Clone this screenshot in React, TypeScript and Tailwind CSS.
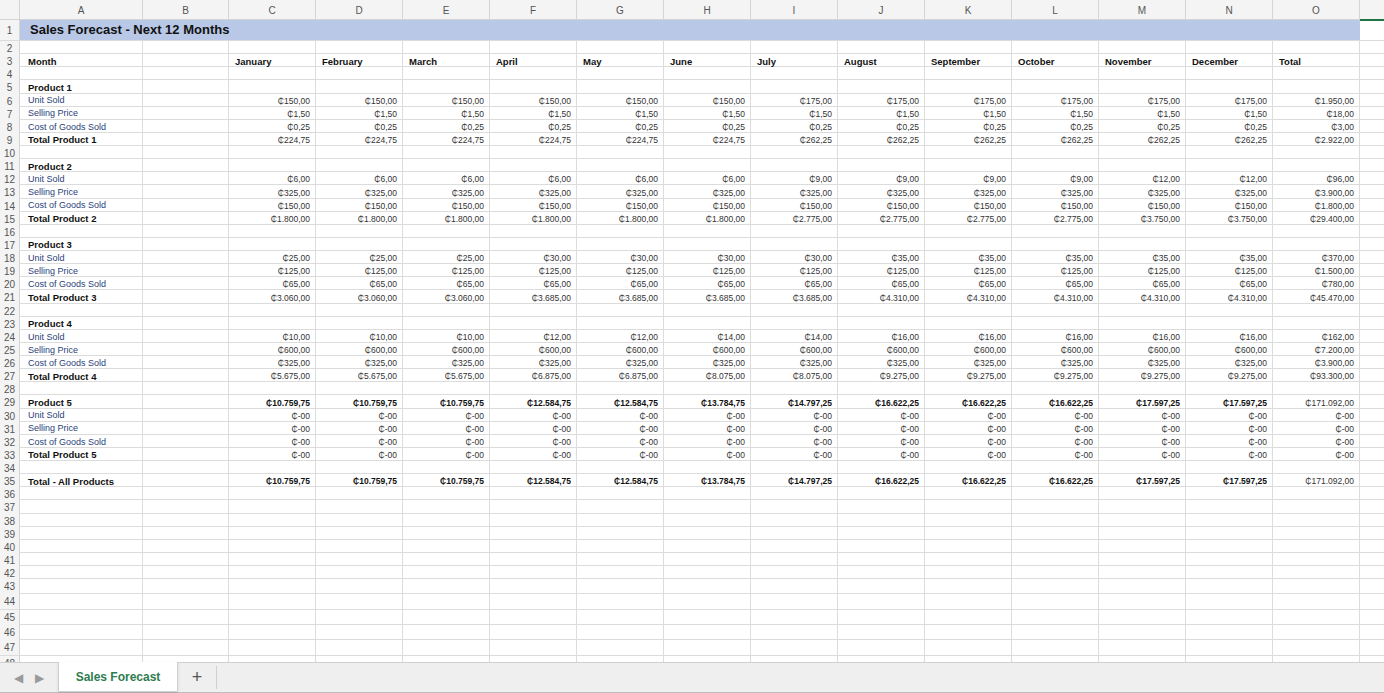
import React from "react";

const C = "₵";
const cols = ["A","B","C","D","E","F","G","H","I","J","K","L","M","N","O"];
const months = ["January","February","March","April","May","June","July","August","September","October","November","December","Total"];
const rep = (arr: [string, number][]) => arr.flatMap(([v, n]) => Array(n).fill(v));
const pre = (a: string[]) => a.map((v) => C + v);

type Row = { label?: string; kind?: "title" | "head" | "prod" | "sub" | "total" | "grand"; vals?: string[] };
const rows: Row[] = [];
rows.push({ kind: "title", label: "Sales Forecast - Next 12 Months" });
rows.push({});
rows.push({ kind: "head", label: "Month", vals: months });
rows.push({});
const block = (n: number, u: string[], p: string[], c: string[], t: string[]) => {
  rows.push({ kind: "prod", label: "Product " + n });
  rows.push({ kind: "sub", label: "Unit Sold", vals: pre(u) });
  rows.push({ kind: "sub", label: "Selling Price", vals: pre(p) });
  rows.push({ kind: "sub", label: "Cost of Goods Sold", vals: pre(c) });
  rows.push({ kind: "total", label: "Total Product " + n, vals: pre(t) });
  rows.push({});
};
block(1, [...rep([["150,00",6],["175,00",6]]),"1.950,00"], [...rep([["1,50",12]]),"18,00"], [...rep([["0,25",12]]),"3,00"], [...rep([["224,75",6],["262,25",6]]),"2.922,00"]);
block(2, [...rep([["6,00",6],["9,00",4],["12,00",2]]),"96,00"], [...rep([["325,00",12]]),"3.900,00"], [...rep([["150,00",12]]),"1.800,00"], [...rep([["1.800,00",6],["2.775,00",4],["3.750,00",2]]),"29.400,00"]);
block(3, [...rep([["25,00",3],["30,00",4],["35,00",5]]),"370,00"], [...rep([["125,00",12]]),"1.500,00"], [...rep([["65,00",12]]),"780,00"], [...rep([["3.060,00",3],["3.685,00",4],["4.310,00",5]]),"45.470,00"]);
block(4, [...rep([["10,00",3],["12,00",2],["14,00",2],["16,00",5]]),"162,00"], [...rep([["600,00",12]]),"7.200,00"], [...rep([["325,00",12]]),"3.900,00"], [...rep([["5.675,00",3],["6.875,00",2],["8.075,00",2],["9.275,00",5]]),"93.300,00"]);
const p5 = pre([...rep([["10.759,75",3],["12.584,75",2],["13.784,75",1],["14.797,25",1],["16.622,25",3],["17.597,25",2]]),"171.092,00"]);
const dash = pre(rep([["-00",13]]));
rows.push({ kind: "prod", label: "Product 5", vals: p5 });
rows.push({ kind: "sub", label: "Unit Sold", vals: dash });
rows.push({ kind: "sub", label: "Selling Price", vals: dash });
rows.push({ kind: "sub", label: "Cost of Goods Sold", vals: dash });
rows.push({ kind: "total", label: "Total Product 5", vals: dash });
rows.push({});
rows.push({ kind: "grand", label: "Total - All Products", vals: p5 });
while (rows.length < 48) rows.push({});

const tpl = "grid grid-cols-[20px_123px_86px_repeat(13,87px)_1fr]";

export default function App() {
  return (
    <div className="w-[1384px] h-[693px] overflow-hidden bg-white flex flex-col" style={{ fontFamily: "'Liberation Sans', Arial, sans-serif" }}>
      <div className="flex-1 overflow-hidden">
        <div className={tpl + " h-[20px] bg-[#f4f4f4] border-b border-[#d4d4d4] text-[10px] text-[#555]"}>
          <div className="border-r border-[#d4d4d4]" />
          {cols.map((c) => (
            <div key={c} className="flex items-center justify-center border-r border-[#d4d4d4]">{c}</div>
          ))}
          <div className="border-b-2 border-[#217346] h-[21px]" />
        </div>
        {rows.map((r, i) => {
          const h = i === 0 ? "h-[21px]" : i >= 42 ? "h-[15.3px]" : "h-[13.13px]";
          return (
            <div key={i} className={tpl + " " + h + " border-b border-[#dcdcdc]"}>
              <div className="flex items-center justify-center text-[10px] text-[#555] bg-[#f4f4f4] border-r border-[#d4d4d4]">{i + 1}</div>
              {r.kind === "title" ? (
                <>
                  <div className="col-span-15 bg-[#b8c8e6] flex items-center pl-[10px] text-[13px] font-bold text-[#111]">{r.label}</div>
                  <div />
                </>
              ) : (
                <>
                  <div className={"flex items-center pl-[8px] whitespace-nowrap border-r border-[#dcdcdc] " + (r.kind === "sub" ? "text-[9px] text-[#2b3f7a]" : r.kind ? "text-[9.5px] font-bold text-[#111]" : "")}>{r.label}</div>
                  <div className="border-r border-[#dcdcdc]" />
                  {Array.from({ length: 13 }).map((_, j) => {
                    const v = r.vals?.[j];
                    const isHead = r.kind === "head";
                    const bold = (r.kind === "prod" || r.kind === "grand") && j < 12;
                    return (
                      <div key={j} className={"flex items-center whitespace-nowrap border-r border-[#dcdcdc] " + (isHead ? "pl-[6px] text-[9.5px] font-bold text-[#111]" : "justify-end pr-[5px] text-[8.5px] " + (bold ? "font-bold text-[#111]" : "text-[#333]"))}>{v}</div>
                    );
                  })}
                  <div />
                </>
              )}
            </div>
          );
        })}
      </div>
      <div className="h-[31px] shrink-0 bg-[#efefef] border-t border-[#d0d0d0] border-b border-b-[#bdbdbd] flex items-stretch">
        <div className="w-[58px] flex items-center justify-center gap-[12px] text-[#9a9a9a] text-[12px]">
          <span>◀</span><span>▶</span>
        </div>
        <div className="w-[120px] -mt-px bg-white border-x border-b border-[#cfcfcf] rounded-b-[2px] shadow-sm flex items-center justify-center text-[12px] font-bold text-[#2e7d4f]">Sales Forecast</div>
        <div className="w-[38px] flex items-center justify-center text-[18px] text-[#555]">+</div>
        <div className="border-l border-[#d0d0d0] my-[3px]" />
      </div>
    </div>
  );
}
